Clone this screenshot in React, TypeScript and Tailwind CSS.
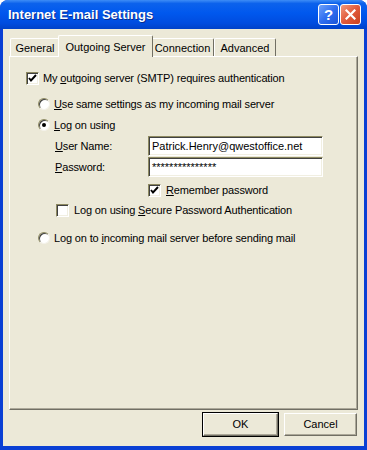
import type { ReactNode } from "react";

const Acc = ({ children }: { children: ReactNode }) => (
  <span className="underline underline-offset-[1px]">{children}</span>
);

const Checkbox = ({ checked }: { checked?: boolean }) => (
  <span className="relative inline-flex w-[13px] h-[13px] shrink-0 bg-white border border-t-[#8D8961] border-l-[#8D8961] border-b-white border-r-white shadow-[inset_1px_1px_0_#404040,inset_-1px_-1px_0_#F1EFE2]">
    {checked && (
      <svg className="absolute left-[1px] top-[1px]" width="9" height="9" viewBox="0 0 9 9">
        <polyline points="1,4 3,6.5 8,1" fill="none" stroke="#000" strokeWidth="1.9" />
      </svg>
    )}
  </span>
);

const Radio = ({ checked }: { checked?: boolean }) => (
  <span className="relative inline-flex w-[12px] h-[12px] shrink-0 rounded-full bg-white border border-t-[#8D8961] border-l-[#8D8961] border-b-[#F4F2EA] border-r-[#F4F2EA] shadow-[inset_1px_1px_0_#404040] items-center justify-center">
    {checked && <span className="w-[4px] h-[4px] rounded-full bg-black" />}
  </span>
);

const TextBox = ({ value }: { value: string }) => (
  <div className="w-[175px] h-[20px] bg-white border border-t-[#8D8961] border-l-[#8D8961] border-b-white border-r-white shadow-[inset_1px_1px_0_#404040,inset_-1px_-1px_0_#F1EFE2] pl-[3px] flex items-center text-[11px] leading-none tracking-normal">
    {value}
  </div>
);

const Tab = ({ label, w, active }: { label: string; w: string; active?: boolean }) =>
  active ? (
    <div className={`relative z-10 ${w} h-[22px] -mx-[2px] -mb-[1px] bg-[#ECE9D8] border-t border-l border-white border-r border-r-[#716F64] rounded-t-[2px] flex items-start justify-center pt-[3px] text-[11px]`}>
      {label}
    </div>
  ) : (
    <div className={`${w} h-[18px] bg-[#ECE9D8] border-t border-l border-white border-r border-r-[#716F64] rounded-t-[2px] flex items-center justify-center pt-[1px] text-[11px]`}>
      {label}
    </div>
  );

const Button = ({ label, primary }: { label: string; primary?: boolean }) => (
  <div className={`h-[25px] flex items-center justify-center text-[11px] ${primary ? "w-[77px] border border-black" : "w-[75px] border border-transparent"}`}>
    <div className="w-full h-full bg-[#ECE9D8] border border-t-white border-l-white border-b-[#716F64] border-r-[#716F64] shadow-[inset_-1px_-1px_0_#ACA899] flex items-center justify-center">
      {label}
    </div>
  </div>
);

export default function App() {
  return (
    <div className="w-[367px] h-[450px] flex flex-col bg-[#0A3FD4] rounded-t-[8px] font-['Liberation_Sans',Arial,sans-serif] text-black">
      <div className="h-[29px] shrink-0 rounded-t-[8px] bg-[linear-gradient(to_bottom,#3E8DF6_0%,#0C62EC_12%,#0058EE_45%,#004CDF_80%,#0041C8_100%)] flex items-center pl-[8px] pr-[6px]">
        <span className="text-white font-bold text-[13px] [text-shadow:1px_1px_0_#0A2D8F] grow">
          Internet E-mail Settings
        </span>
        <div className="flex gap-[1px]">
          <div className="w-[21px] h-[21px] rounded-[3px] border border-white bg-[linear-gradient(135deg,#6FA2FA_0%,#2F6EF0_50%,#1A54D8_100%)] flex items-center justify-center text-white font-bold text-[15px] leading-none">
            ?
          </div>
          <div className="w-[21px] h-[21px] rounded-[3px] border border-white bg-[linear-gradient(135deg,#F19A7E_0%,#E15A3B_50%,#C7401F_100%)] flex items-center justify-center">
            <svg width="11" height="11" viewBox="0 0 11 11">
              <path d="M1.5 1.5 L9.5 9.5 M9.5 1.5 L1.5 9.5" stroke="#fff" strokeWidth="2.2" strokeLinecap="square" />
            </svg>
          </div>
        </div>
      </div>

      <div className="flex-1 mx-[3px] mb-[4px] bg-[#ECE9D8] flex flex-col pt-[6px] px-[6px]">
        <div className="flex items-end h-[21px] pl-[1px]">
          <Tab label="General" w="w-[50px]" />
          <Tab label="Outgoing Server" w="w-[95px]" active />
          <Tab label="Connection" w="w-[63px]" />
          <Tab label="Advanced" w="w-[62px]" />
        </div>

        <div className="h-[354px] border border-t-white border-l-white border-b-[#716F64] border-r-[#716F64] shadow-[inset_-1px_-1px_0_#ACA899] flex flex-col text-[11px] leading-none tracking-[-0.15px]">
          <label className="flex items-center gap-[4px] ml-[16px] mt-[15px]">
            <Checkbox checked />
            <span>
              My <Acc>o</Acc>utgoing server (SMTP) requires authentication
            </span>
          </label>

          <label className="flex items-center gap-[4px] ml-[28px] mt-[13px]">
            <Radio />
            <span>
              <Acc>U</Acc>se same settings as my incoming mail server
            </span>
          </label>

          <label className="flex items-center gap-[4px] ml-[28px] mt-[9px]">
            <Radio checked />
            <span>
              <Acc>L</Acc>og on using
            </span>
          </label>

          <div className="flex flex-col gap-[1px] ml-[45px] mt-[5px]">
            <div className="flex items-center">
              <span className="w-[93px]">
                <Acc>U</Acc>ser Name:
              </span>
              <TextBox value="Patrick.Henry@qwestoffice.net" />
            </div>
            <div className="flex items-center">
              <span className="w-[93px]">
                <Acc>P</Acc>assword:
              </span>
              <TextBox value="***************" />
            </div>
          </div>

          <label className="flex items-center gap-[5px] ml-[138px] mt-[7px]">
            <Checkbox checked />
            <span>
              <Acc>R</Acc>emember password
            </span>
          </label>

          <label className="flex items-center gap-[5px] ml-[46px] mt-[7px]">
            <Checkbox />
            <span>
              Log on using <Acc>S</Acc>ecure Password Authentication
            </span>
          </label>

          <label className="flex items-center gap-[4px] ml-[28px] mt-[15px]">
            <Radio />
            <span>
              Log on to <Acc>i</Acc>ncoming mail server before sending mail
            </span>
          </label>
        </div>

        <div className="flex justify-end gap-[4px] mt-[2px]">
          <Button label="OK" primary />
          <Button label="Cancel" />
        </div>
      </div>
    </div>
  );
}
